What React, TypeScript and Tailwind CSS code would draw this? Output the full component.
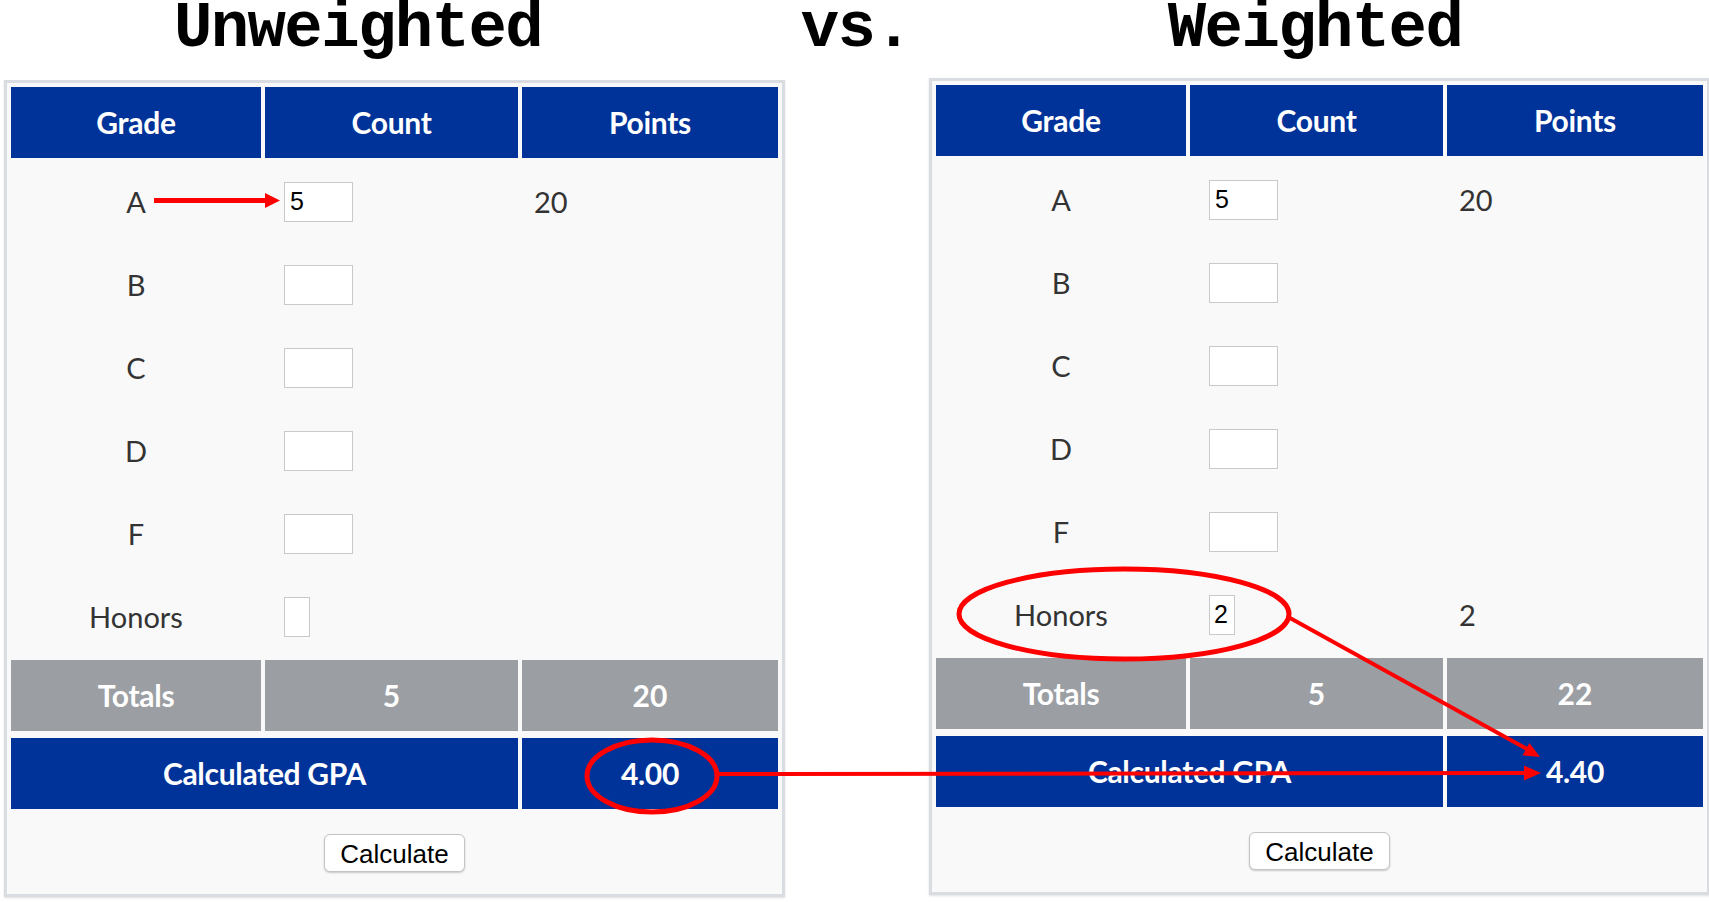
import { Fragment } from 'react';

interface GradeRow {
    grade: string;
    count?: string;
    points?: string;
    narrow?: boolean;
}

interface CardProps {
    rows: GradeRow[];
    totalCount: string;
    totalPoints: string;
    gpa: string;
    className?: string;
}

const HEADERS = ['Grade', 'Count', 'Points'];

function GpaCard({ rows, totalCount, totalPoints, gpa, className = '' }: CardProps) {
    return (
        <div className={`w-[781px] shrink-0 border-[3px] border-[#d9dce0] bg-[#f9f9f9] p-1 pb-[22px] shadow-[0_1px_2px_rgba(0,0,0,0.12)] ${className}`}>
            <div className="grid grid-cols-[250px_253px_256px] gap-1 font-['Lato',sans-serif]">
                {/* Header */}
                {HEADERS.map((h) => (
                    <div key={h} className="flex h-[71px] items-center justify-center bg-[#003399] text-[30px] font-bold tracking-[-0.3px] text-white">
                        {h}
                    </div>
                ))}

                {/* Grade rows */}
                {rows.map((row) => (
                    <Fragment key={row.grade}>
                        <div className="flex h-[79px] items-center justify-center text-[29px] text-[#333333]">
                            {row.grade}
                        </div>
                        <div className="flex items-center pl-[19px]">
                            <input
                                readOnly
                                value={row.count ?? ''}
                                className={`h-[40px] border border-[#c9c9c9] bg-white font-['Liberation_Sans',sans-serif] text-[25px] text-black outline-none ${row.narrow ? 'w-[26px] pl-[4px]' : 'w-[69px] pl-[5px]'}`}
                            />
                        </div>
                        <div className="flex items-center pl-3 text-[29px] text-[#333333]">
                            {row.points}
                        </div>
                    </Fragment>
                ))}

                {/* Totals */}
                <div className="flex h-[71px] items-center justify-center bg-[#9b9ea3] text-[30px] font-bold tracking-[-0.3px] text-white">Totals</div>
                <div className="flex h-[71px] items-center justify-center bg-[#9b9ea3] text-[30px] font-bold text-white">{totalCount}</div>
                <div className="flex h-[71px] items-center justify-center bg-[#9b9ea3] text-[30px] font-bold text-white">{totalPoints}</div>

                {/* GPA */}
                <div className="col-span-2 mt-[3px] flex h-[71px] items-center justify-center bg-[#003399] text-[30px] font-bold tracking-[-0.3px] text-white">
                    Calculated GPA
                </div>
                <div className="mt-[3px] flex h-[71px] items-center justify-center bg-[#003399] text-[30px] font-bold tracking-[-0.3px] text-white">
                    {gpa}
                </div>
            </div>

            <div className="mt-[25px] flex justify-center">
                <button className="h-[38px] w-[141px] rounded-[6px] border border-[#c4c4c4] bg-white font-['Liberation_Sans',sans-serif] text-[26px] text-black shadow-[0_1px_2px_rgba(0,0,0,0.2)]">
                    Calculate
                </button>
            </div>
        </div>
    );
}

const UNWEIGHTED: GradeRow[] = [
    { grade: 'A', count: '5', points: '20' },
    { grade: 'B' },
    { grade: 'C' },
    { grade: 'D' },
    { grade: 'F' },
    { grade: 'Honors', narrow: true },
];

const WEIGHTED: GradeRow[] = [
    { grade: 'A', count: '5', points: '20' },
    { grade: 'B' },
    { grade: 'C' },
    { grade: 'D' },
    { grade: 'F' },
    { grade: 'Honors', count: '2', points: '2', narrow: true },
];

// red markup drawn over both calculators
function Annotations() {
    return (
        <svg className="pointer-events-none absolute left-0 top-0" width="1709" height="902" viewBox="0 0 1709 902">
            <g fill="none" stroke="#ff0000" strokeWidth="5">
                <line x1="154" y1="200.5" x2="267" y2="200.5" />
                <ellipse cx="652" cy="776" rx="65" ry="36" />
                <line x1="719" y1="774" x2="1526" y2="773" strokeWidth="4" />
                <ellipse cx="1124" cy="614" rx="165" ry="45" />
                <line x1="1290" y1="618" x2="1527" y2="749" strokeWidth="4" />
            </g>
            <g fill="#ff0000">
                <polygon points="265,193 280,200.5 265,208" />
                <polygon points="1524,765.5 1541,773 1524,780.5" />
                <polygon points="1522.6,755.3 1540,757 1529.4,743.1" />
            </g>
        </svg>
    );
}

export default function App() {
    return (
        <div className="relative h-[902px] w-[1709px] overflow-hidden bg-white">
            {/* Titles */}
            <div className="flex h-[78px] items-start font-['Liberation_Mono',monospace] text-[64px] font-bold leading-[58px] tracking-[-1.6px] text-black">
                <div className="w-[716px] text-center">Unweighted</div>
                <div className="w-[280px] text-center">vs.</div>
                <div className="w-[638px] text-center">Weighted</div>
            </div>

            {/* Calculators */}
            <div className="flex items-start">
                <GpaCard rows={UNWEIGHTED} totalCount="5" totalPoints="20" gpa="4.00" className="ml-[4px] mt-[2px]" />
                <GpaCard rows={WEIGHTED} totalCount="5" totalPoints="22" gpa="4.40" className="ml-[144px]" />
            </div>

            <Annotations />
        </div>
    );
}
